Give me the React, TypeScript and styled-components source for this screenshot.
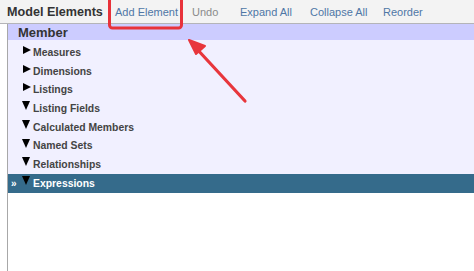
import React from "react";
import styled, { createGlobalStyle } from "styled-components";

const GlobalStyle = createGlobalStyle`
  html, body {
    margin: 0;
    padding: 0;
    background: #ffffff;
    font-family: "Liberation Sans", Arial, sans-serif;
  }
`;

const Page = styled.div`
  position: relative;
  width: 474px;
  height: 271px;
  overflow: hidden;
  background: #ffffff;
`;

const Toolbar = styled.div`
  height: 23px;
  display: flex;
  align-items: center;
  padding-left: 7px;
  background: #f3f3f3;
  border-bottom: 1px solid #b4b4b8;
`;

const Title = styled.span`
  width: 108px;
  font-size: 12.6px;
  font-weight: bold;
  color: #333333;
`;

const ToolLink = styled.span<{ $disabled?: boolean; $width: number }>`
  width: ${(p) => p.$width}px;
  font-size: 11px;
  color: ${(p) => (p.$disabled ? "#8a8a8a" : "#4f77a6")};
  white-space: nowrap;
`;

const Panel = styled.div`
  margin-left: 7px;
  border-left: 1px solid #a8a8a8;
  height: 247px;
  background: #ffffff;
`;

const Header = styled.div`
  height: 16px;
  display: flex;
  align-items: center;
  padding-left: 10px;
  background: #ccccff;
  font-size: 13px;
  font-weight: bold;
  color: #333333;
`;

const Tree = styled.div`
  background: #f1f0ff;
  padding-top: 3px;
`;

const Row = styled.div<{ $active?: boolean }>`
  position: relative;
  height: 18.7px;
  display: flex;
  align-items: center;
  padding-left: 14px;
  font-size: 10.4px;
  font-weight: bold;
  color: ${(p) => (p.$active ? "#ffffff" : "#444444")};
  background: ${(p) => (p.$active ? "#356b8b" : "transparent")};
`;

const Caret = styled.span<{ $open: boolean }>`
  display: inline-block;
  width: 0;
  height: 0;
  margin-top: -5px;
  margin-right: ${(p) => (p.$open ? 3 : 2)}px;
  margin-left: ${(p) => (p.$open ? 0 : 1)}px;
  border-style: solid;
  border-color: transparent;
  ${(p) =>
    p.$open
      ? `border-width: 9px 4px 0 4px; border-top-color: #000000;`
      : `border-width: 4.5px 0 4.5px 8px; border-left-color: #000000;`}
`;

const Marker = styled.span`
  position: absolute;
  left: 3px;
  font-size: 10px;
  color: #ffffff;
`;

const Overlay = styled.svg`
  position: absolute;
  left: 0;
  top: 0;
  pointer-events: none;
`;

type Item = { label: string; open: boolean; active?: boolean };

const items: Item[] = [
  { label: "Measures", open: false },
  { label: "Dimensions", open: false },
  { label: "Listings", open: false },
  { label: "Listing Fields", open: true },
  { label: "Calculated Members", open: true },
  { label: "Named Sets", open: true },
  { label: "Relationships", open: true },
  { label: "Expressions", open: true, active: true },
];

export default function App() {
  return (
    <Page>
      <GlobalStyle />
      <Toolbar>
        <Title>Model Elements</Title>
        <ToolLink $width={77}>Add Element</ToolLink>
        <ToolLink $disabled $width={48}>Undo</ToolLink>
        <ToolLink $width={70}>Expand All</ToolLink>
        <ToolLink $width={73}>Collapse All</ToolLink>
        <ToolLink $width={60}>Reorder</ToolLink>
      </Toolbar>
      <Panel>
        <Header>Member</Header>
        <Tree>
          {items.map((it) => (
            <Row key={it.label} $active={it.active}>
              {it.active && <Marker>»</Marker>}
              <Caret $open={it.open} />
              {it.label}
            </Row>
          ))}
        </Tree>
      </Panel>
      <Overlay width="474" height="271" viewBox="0 0 474 271">
        <rect x="109.5" y="-3" width="72" height="31" rx="3" fill="none" stroke="#e8323a" strokeWidth="3" />
        <line x1="245" y1="101" x2="196" y2="48" stroke="#e8363c" strokeWidth="3.2" strokeLinecap="round" />
        <polygon points="189,40 205,46 196,54" fill="#e8363c" stroke="#e8363c" strokeWidth="2" strokeLinejoin="round" />
      </Overlay>
    </Page>
  );
}
